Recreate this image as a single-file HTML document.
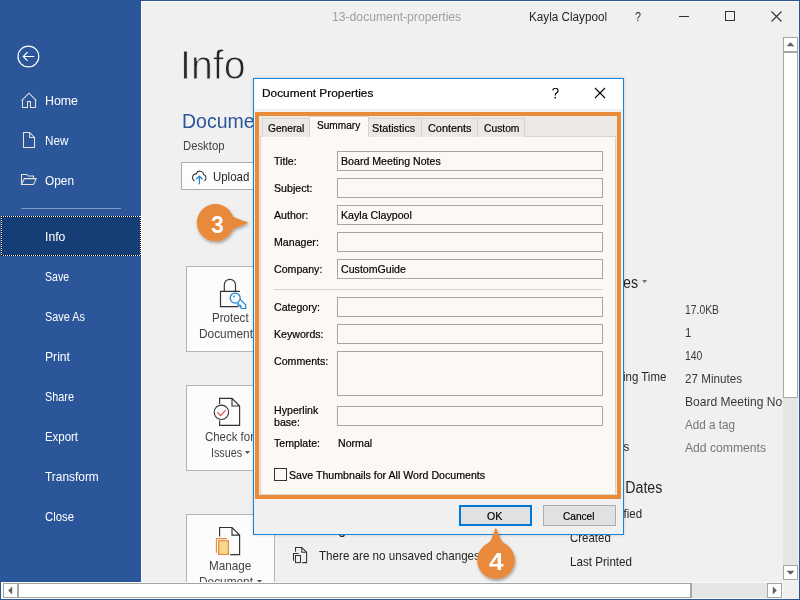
<!DOCTYPE html>
<html><head><meta charset="utf-8"><style>
html,body{margin:0;padding:0;}
body{width:800px;height:600px;overflow:hidden;position:relative;font-family:"Liberation Sans",sans-serif;}
.t{position:absolute;white-space:nowrap;line-height:1;transform-origin:0 0;}
.r{position:absolute;}
</style></head><body>
<div class="r" style="left:0px;top:0px;width:800px;height:600px;background:#F0F0F0;"></div>
<div class="r" style="left:0px;top:0px;width:141px;height:582px;background:#2B579A;"></div>
<div class="r" style="left:0px;top:0px;width:800px;height:1px;background:#2B579A;"></div>
<div class="r" style="left:141px;top:1px;width:658px;height:1px;background:#FAFAF8;"></div>
<div class="r" style="left:141px;top:1px;width:1px;height:581px;background:#FAFAF8;"></div>
<svg class="r" style="left:16px;top:45px" width="25" height="24" viewBox="0 0 25 24"><circle cx="12.4" cy="11.5" r="10.4" fill="none" stroke="#fff" stroke-width="1.2"/><path d="M7.3 11.5H18.3M11.6 7.2L7.3 11.5L11.6 15.8" fill="none" stroke="#fff" stroke-width="1.2"/></svg>
<svg class="r" style="left:16px;top:88px" width="24" height="24" viewBox="0 0 24 24"><path d="M5.6 12.6L13 5.2L20.4 12.6M6.5 11.6V19.5H11.5V13.6H14.5V19.5H19.5V11.6" fill="none" stroke="#E6E2DA" stroke-width="1.05"/></svg>
<svg class="r" style="left:16px;top:126px" width="24" height="64" viewBox="0 0 24 64"><g fill="none" stroke="#E6E2DA" stroke-width="1.05"><path d="M7.5 6.5H13.6L18.5 11.4V21.5H7.5Z M13.6 6.5V11.4H18.5"/><path d="M5.5 58.5V48.5H10.8L12.3 50H17.5V52.5 M5.5 58.5L8.3 52.6H20.2L17.5 58.5Z"/></g></svg>
<div class="t" style="left:45.00px;top:94.00px;font-size:13px;color:#fff;transform:scaleX(0.9517);">Home</div>
<div class="t" style="left:45.00px;top:133.80px;font-size:13px;color:#fff;transform:scaleX(0.8998);">New</div>
<div class="t" style="left:45.00px;top:173.70px;font-size:13px;color:#fff;transform:scaleX(0.9120);">Open</div>
<div class="r" style="left:21px;top:208px;width:100px;height:1px;background:#7F9CC8;"></div>
<div class="r" style="left:1px;top:216px;width:140px;height:40px;background:#153E76;"></div>
<div class="r" style="left:1px;top:216px;width:140px;height:40px;background-image:repeating-linear-gradient(90deg,#fff 0 1px,#000 1px 2px);-webkit-mask:linear-gradient(#000,#000) top/100% 1px no-repeat,linear-gradient(#000,#000) bottom/100% 1px no-repeat;"></div>
<div class="r" style="left:1px;top:216px;width:140px;height:40px;background-image:repeating-linear-gradient(180deg,#fff 0 1px,#000 1px 2px);-webkit-mask:linear-gradient(#000,#000) left/1px 100% no-repeat,linear-gradient(#000,#000) right/1px 100% no-repeat;"></div>
<div class="t" style="left:45.00px;top:229.80px;font-size:13px;color:#fff;transform:scaleX(0.9363);">Info</div>
<div class="t" style="left:45.00px;top:270.00px;font-size:13px;color:#fff;transform:scaleX(0.8100);">Save</div>
<div class="t" style="left:45.00px;top:310.00px;font-size:13px;color:#fff;transform:scaleX(0.8386);">Save As</div>
<div class="t" style="left:45.00px;top:350.00px;font-size:13px;color:#fff;transform:scaleX(0.9353);">Print</div>
<div class="t" style="left:45.00px;top:390.00px;font-size:13px;color:#fff;transform:scaleX(0.8360);">Share</div>
<div class="t" style="left:45.00px;top:430.00px;font-size:13px;color:#fff;transform:scaleX(0.8784);">Export</div>
<div class="t" style="left:45.00px;top:470.00px;font-size:13px;color:#fff;transform:scaleX(0.9150);">Transform</div>
<div class="t" style="left:45.00px;top:510.00px;font-size:13px;color:#fff;transform:scaleX(0.8726);">Close</div>
<div class="t" style="left:332.40px;top:11.24px;font-size:12px;color:#A0A0A0;transform:scaleX(1.0142);">13-document-properties</div>
<div class="t" style="left:528.80px;top:11.24px;font-size:12px;color:#262626;transform:scaleX(0.9745);">Kayla Claypool</div>
<div class="t" style="left:634.80px;top:11.24px;font-size:12px;color:#262626;transform:scaleX(0.8991);">?</div>
<div class="r" style="left:679px;top:16px;width:10px;height:1px;background:#333;"></div>
<div class="r" style="left:725px;top:11px;width:10px;height:10px;border:1px solid #333;box-sizing:border-box;"></div>
<svg class="r" style="left:771px;top:11px" width="11" height="11" viewBox="0 0 11 11"><path d="M0.5 0.5L10.5 10.5M10.5 0.5L0.5 10.5" stroke="#333" stroke-width="1.1"/></svg>
<div class="t" style="left:180.00px;top:45.14px;font-size:40px;color:#262626;transform:scaleX(0.9818);-webkit-text-stroke:0.9px #F0F0F0;">Info</div>
<div class="t" style="left:182.20px;top:110.57px;font-size:20px;color:#2B579A;transform:scaleX(0.9750);">Document Properties</div>
<div class="t" style="left:182.80px;top:139.84px;font-size:12px;color:#444;transform:scaleX(0.9428);">Desktop</div>
<div class="r" style="left:181px;top:162px;width:120px;height:28px;background:#FDFDFD;border:1px solid #ABABAB;box-sizing:border-box;"></div>
<svg class="r" style="left:185px;top:165px" width="30" height="25" viewBox="0 0 30 25"><path d="M9.5 15.7A3.6 3.6 0 0 1 11.4 8.9A3.6 3.6 0 0 1 18.5 9.6A3.3 3.3 0 0 1 19.3 15.7" fill="none" stroke="#3A3A3A" stroke-width="1.05"/><path d="M14.4 19.2V11.4M11.2 14.3L14.4 11.2L17.6 14.3" fill="none" stroke="#1E88D5" stroke-width="1.25"/></svg>
<div class="t" style="left:213.20px;top:169.50px;font-size:13px;color:#262626;transform:scaleX(0.8800);">Upload</div>
<div class="r" style="left:186px;top:266px;width:89px;height:86px;background:#FCFCFC;border:1px solid #B4B4B4;box-sizing:border-box;"></div>
<div class="r" style="left:186px;top:385px;width:89px;height:86px;background:#FCFCFC;border:1px solid #B4B4B4;box-sizing:border-box;"></div>
<div class="r" style="left:186px;top:514px;width:89px;height:80px;background:#FCFCFC;border:1px solid #B4B4B4;box-sizing:border-box;"></div>
<svg class="r" style="left:214px;top:274px" width="36" height="38" viewBox="0 0 36 38"><g fill="none" stroke="#333" stroke-width="1.15"><path d="M10.3 17.2V10.9A5.6 5.6 0 0 1 21.5 10.9V17.2"/><path d="M24.5 32.6H6.5V17.3H25.8"/></g><path d="M24.6 27.4L31.8 34.6V38H27.6L26.4 36.8L27.2 36L25.9 34.7L25.1 35.5L23.8 34.2L24.6 33.4L22.4 31.2" fill="#FCFCFC" stroke="#1E88D5" stroke-width="1.2" transform="translate(0,-3.5)"/><circle cx="21.2" cy="24.1" r="5" fill="#FCFCFC" stroke="#1E88D5" stroke-width="1.25"/><rect x="19.2" y="21.6" width="1.6" height="1.6" fill="#1E88D5"/></svg>
<div class="t" style="left:211.70px;top:310.70px;font-size:13px;color:#444;transform:scaleX(0.8887);">Protect</div>
<div class="t" style="left:198.70px;top:326.50px;font-size:13px;color:#444;transform:scaleX(0.9115);">Document</div>
<svg class="r" style="left:210px;top:392px" width="36" height="38" viewBox="0 0 36 38"><g fill="none" stroke="#333" stroke-width="1.15"><path d="M9.6 12V6.4H22L29.6 14V33.3H9.6V28.5M22 6.4V14H29.6"/><circle cx="11.4" cy="20.3" r="7.2"/></g><path d="M7.3 20.2L10.5 23.6L15.6 18.2" fill="none" stroke="#E8474C" stroke-width="1.2"/></svg>
<div class="t" style="left:205.20px;top:430.00px;font-size:13px;color:#444;transform:scaleX(0.8800);">Check for</div>
<div class="t" style="left:210.70px;top:445.60px;font-size:13px;color:#444;transform:scaleX(0.8251);">Issues</div>
<svg class="r" style="left:245px;top:451px" width="6" height="4"><path d="M0 0H5L2.5 3Z" fill="#555"/></svg>
<svg class="r" style="left:210px;top:522px" width="36" height="38" viewBox="0 0 36 38"><path d="M9.6 14.6V5.5H22L29.6 13.1V32.6H20.3M22 5.5V13.1H29.6" fill="none" stroke="#333" stroke-width="1.15"/><path d="M6.4 30.8V16.6H16.8" fill="none" stroke="#E8893B" stroke-width="1.1"/><rect x="8.6" y="18.8" width="9.8" height="13.6" fill="#F6D88F" stroke="#E8893B" stroke-width="1.25"/></svg>
<div class="t" style="left:209.40px;top:559.20px;font-size:13px;color:#444;transform:scaleX(0.9005);">Manage</div>
<div class="t" style="left:199.00px;top:575.00px;font-size:13px;color:#444;transform:scaleX(0.9115);">Document</div>
<svg class="r" style="left:257px;top:580px" width="6" height="4"><path d="M0 0H5L2.5 3Z" fill="#555"/></svg>
<div class="t" style="left:303.00px;top:520.96px;font-size:16px;color:#262626;transform:scaleX(0.8800);">Manage Document</div>
<svg class="r" style="left:286px;top:542px" width="30" height="24" viewBox="0 0 30 24"><g fill="none" stroke="#333" stroke-width="1.05"><path d="M9.5 9.8V5.5H15.8L20.6 10.3V20.6H16.2M15.8 5.5V10.3H20.6"/><rect x="9.5" y="13.5" width="5" height="7.1"/><path d="M7.5 18.8V11.5H12.7"/></g></svg>
<div class="t" style="left:318.75px;top:548.75px;font-size:13px;color:#262626;transform:scaleX(0.8940);">There are no unsaved changes.</div>
<div class="r" style="left:141px;top:0;width:641px;height:582px;overflow:hidden;">
<div class="t" style="left:432.15px;top:275.49px;font-size:15.6px;color:#262626;transform:scaleX(0.9150);">Properties</div>
<svg class="r" style="left:501px;top:280px" width="6" height="4"><path d="M0 0H5.2L2.6 3.2Z" fill="#777"/></svg>
<div class="t" style="left:434.71px;top:370.40px;font-size:13px;color:#262626;transform:scaleX(0.8800);">Total Editing Time</div>
<div class="t" style="left:432.90px;top:439.70px;font-size:13px;color:#262626;transform:scaleX(0.8800);">Comments</div>
<div class="t" style="left:544.30px;top:302.60px;font-size:13px;color:#3A3A3A;transform:scaleX(0.7973);">17.0KB</div>
<div class="t" style="left:544.30px;top:326.00px;font-size:13px;color:#3A3A3A;transform:scaleX(0.8800);">1</div>
<div class="t" style="left:544.30px;top:349.00px;font-size:13px;color:#3A3A3A;transform:scaleX(0.8023);">140</div>
<div class="t" style="left:544.30px;top:372.00px;font-size:13px;color:#3A3A3A;transform:scaleX(0.8964);">27 Minutes</div>
<div class="t" style="left:544.30px;top:395.00px;font-size:13px;color:#3A3A3A;transform:scaleX(0.9270);">Board Meeting Notes</div>
<div class="t" style="left:544.30px;top:418.00px;font-size:13px;color:#767676;transform:scaleX(0.8984);">Add a tag</div>
<div class="t" style="left:544.30px;top:440.70px;font-size:13px;color:#767676;transform:scaleX(0.9343);">Add comments</div>
<div class="t" style="left:431.35px;top:479.79px;font-size:15.6px;color:#262626;transform:scaleX(0.9150);">Related Dates</div>
<div class="t" style="left:432.66px;top:506.50px;font-size:13px;color:#262626;transform:scaleX(0.8800);">Last Modified</div>
<div class="t" style="left:428.80px;top:531.20px;font-size:13px;color:#262626;transform:scaleX(0.8822);">Created</div>
<div class="t" style="left:428.80px;top:555.20px;font-size:13px;color:#262626;transform:scaleX(0.8938);">Last Printed</div>
</div>
<div class="r" style="left:783px;top:37px;width:15px;height:15px;background:#fff;border:1px solid #A6A6A6;box-sizing:border-box;"></div>
<svg class="r" style="left:786px;top:41px" width="9" height="6"><path d="M0.5 5.2H8.5L4.5 1.2Z" fill="#606060"/></svg>
<div class="r" style="left:783px;top:52px;width:15px;height:346px;background:#fff;border:1px solid #A6A6A6;box-sizing:border-box;"></div>
<div class="r" style="left:783px;top:398px;width:15px;height:167px;background:#E5E5E5;"></div>
<div class="r" style="left:783px;top:565px;width:15px;height:15px;background:#fff;border:1px solid #A6A6A6;box-sizing:border-box;"></div>
<svg class="r" style="left:786px;top:570px" width="9" height="6"><path d="M0.5 0.8H8.5L4.5 4.8Z" fill="#606060"/></svg>
<div class="r" style="left:1px;top:582px;width:782px;height:17px;background:#FAFAF8;"></div>
<div class="r" style="left:3px;top:583px;width:15px;height:15px;background:#fff;border:1px solid #A6A6A6;box-sizing:border-box;"></div>
<svg class="r" style="left:7px;top:586px" width="6" height="9"><path d="M5.2 0.5V8.5L1.2 4.5Z" fill="#606060"/></svg>
<div class="r" style="left:18px;top:583px;width:674px;height:15px;background:#fff;border:1px solid #A6A6A6;border-right-width:2px;box-sizing:border-box;"></div>
<div class="r" style="left:692px;top:583px;width:75px;height:15px;background:#E5E5E5;"></div>
<div class="r" style="left:767px;top:583px;width:15px;height:15px;background:#fff;border:1px solid #A6A6A6;box-sizing:border-box;"></div>
<svg class="r" style="left:772px;top:586px" width="6" height="9"><path d="M0.8 0.5V8.5L4.8 4.5Z" fill="#606060"/></svg>
<div class="r" style="left:783px;top:580px;width:15px;height:19px;background:#F0F0F0;"></div>
<div class="r" style="left:0px;top:0px;width:1px;height:600px;background:#2B579A;"></div>
<div class="r" style="left:799px;top:0px;width:1px;height:600px;background:#2B579A;"></div>
<div class="r" style="left:0px;top:599px;width:800px;height:1px;background:#2B579A;"></div>
<div class="r" style="left:253px;top:78px;width:371px;height:457px;background:#F0F0F0;border:1px solid #1883D7;box-sizing:border-box;box-shadow:0 0 3px rgba(0,0,0,0.16);"></div>
<div class="r" style="left:254px;top:79px;width:369px;height:30px;background:#fff;"></div>
<div class="t" style="left:262.30px;top:87.91px;font-size:11.8px;color:#000;transform:scaleX(1.0051);-webkit-text-stroke:0.2px #000;">Document Properties</div>
<svg class="r" style="left:552px;top:88px" width="7" height="11" viewBox="0 0 7 11"><path d="M0.8 2.6A2.6 2.4 0 1 1 4.4 4.9C3.3 5.6 3.2 6 3.2 7.4" fill="none" stroke="#000" stroke-width="1.15"/><rect x="2.5" y="9" width="1.4" height="1.5" fill="#000"/></svg>
<svg class="r" style="left:594px;top:87px" width="12" height="12" viewBox="0 0 12 12"><path d="M1 1L11 11M11 1L1 11" stroke="#000" stroke-width="1.1"/></svg>
<div class="r" style="left:255px;top:112px;width:366px;height:387px;background:#FBF7F4;"></div>
<div class="r" style="left:259px;top:116px;width:358px;height:379px;background:#ECE8E4;"></div>
<div class="r" style="left:260px;top:136px;width:356px;height:359px;background:#FCF8F4;border:1px solid #D8D4D0;box-sizing:border-box;"></div>
<div class="r" style="left:262px;top:118px;width:49px;height:19px;background:#ECE8E4;border:1px solid #D8D4D0;border-bottom:none;box-sizing:border-box;"></div>
<div class="t" style="left:267.80px;top:122.69px;font-size:11px;color:#000;transform:scaleX(0.9277);-webkit-text-stroke:0.2px #000;">General</div>
<div class="r" style="left:368px;top:118px;width:54px;height:19px;background:#ECE8E4;border:1px solid #D8D4D0;border-bottom:none;box-sizing:border-box;"></div>
<div class="t" style="left:372.40px;top:122.69px;font-size:11px;color:#000;transform:scaleX(0.9816);-webkit-text-stroke:0.2px #000;">Statistics</div>
<div class="r" style="left:421px;top:118px;width:57px;height:19px;background:#ECE8E4;border:1px solid #D8D4D0;border-bottom:none;box-sizing:border-box;"></div>
<div class="t" style="left:427.70px;top:122.69px;font-size:11px;color:#000;transform:scaleX(0.9881);-webkit-text-stroke:0.2px #000;">Contents</div>
<div class="r" style="left:477px;top:118px;width:48px;height:19px;background:#ECE8E4;border:1px solid #D8D4D0;border-bottom:none;box-sizing:border-box;"></div>
<div class="t" style="left:483.60px;top:122.69px;font-size:11px;color:#000;transform:scaleX(0.9341);-webkit-text-stroke:0.2px #000;">Custom</div>
<div class="r" style="left:309px;top:116px;width:60px;height:21px;background:#FCF8F4;border:1px solid #D8D4D0;border-bottom:none;box-sizing:border-box;"></div>
<div class="t" style="left:316.80px;top:120.19px;font-size:11px;color:#000;transform:scaleX(0.9180);-webkit-text-stroke:0.2px #000;">Summary</div>
<div class="r" style="left:255px;top:112px;width:366px;height:387px;border:4px solid #E98B39;box-sizing:border-box;"></div>
<div class="t" style="left:274.00px;top:155.69px;font-size:11px;color:#000;transform:scaleX(0.9650);-webkit-text-stroke:0.2px #000;">Title:</div>
<div class="r" style="left:337px;top:151px;width:266px;height:20px;background:#FCF8F4;border:1px solid #A8A6A4;box-sizing:border-box;"></div>
<div class="t" style="left:340.50px;top:155.69px;font-size:11px;color:#000;transform:scaleX(0.9650);-webkit-text-stroke:0.2px #000;">Board Meeting Notes</div>
<div class="t" style="left:274.00px;top:182.69px;font-size:11px;color:#000;transform:scaleX(0.9650);-webkit-text-stroke:0.2px #000;">Subject:</div>
<div class="r" style="left:337px;top:178px;width:266px;height:20px;background:#FCF8F4;border:1px solid #A8A6A4;box-sizing:border-box;"></div>
<div class="t" style="left:274.00px;top:209.69px;font-size:11px;color:#000;transform:scaleX(0.9650);-webkit-text-stroke:0.2px #000;">Author:</div>
<div class="r" style="left:337px;top:205px;width:266px;height:20px;background:#FCF8F4;border:1px solid #A8A6A4;box-sizing:border-box;"></div>
<div class="t" style="left:340.50px;top:209.69px;font-size:11px;color:#000;transform:scaleX(0.9650);-webkit-text-stroke:0.2px #000;">Kayla Claypool</div>
<div class="t" style="left:274.00px;top:236.69px;font-size:11px;color:#000;transform:scaleX(0.9650);-webkit-text-stroke:0.2px #000;">Manager:</div>
<div class="r" style="left:337px;top:232px;width:266px;height:20px;background:#FCF8F4;border:1px solid #A8A6A4;box-sizing:border-box;"></div>
<div class="t" style="left:274.00px;top:263.69px;font-size:11px;color:#000;transform:scaleX(0.9650);-webkit-text-stroke:0.2px #000;">Company:</div>
<div class="r" style="left:337px;top:259px;width:266px;height:20px;background:#FCF8F4;border:1px solid #A8A6A4;box-sizing:border-box;"></div>
<div class="t" style="left:340.50px;top:263.69px;font-size:11px;color:#000;transform:scaleX(0.9650);-webkit-text-stroke:0.2px #000;">CustomGuide</div>
<div class="t" style="left:274.00px;top:301.69px;font-size:11px;color:#000;transform:scaleX(0.9650);-webkit-text-stroke:0.2px #000;">Category:</div>
<div class="r" style="left:337px;top:297px;width:266px;height:20px;background:#FCF8F4;border:1px solid #A8A6A4;box-sizing:border-box;"></div>
<div class="t" style="left:274.00px;top:328.69px;font-size:11px;color:#000;transform:scaleX(0.9650);-webkit-text-stroke:0.2px #000;">Keywords:</div>
<div class="r" style="left:337px;top:324px;width:266px;height:20px;background:#FCF8F4;border:1px solid #A8A6A4;box-sizing:border-box;"></div>
<div class="r" style="left:274px;top:289px;width:329px;height:1px;background:#D8D4D0;"></div>
<div class="t" style="left:274.00px;top:355.69px;font-size:11px;color:#000;transform:scaleX(0.9650);-webkit-text-stroke:0.2px #000;">Comments:</div>
<div class="r" style="left:337px;top:351px;width:266px;height:45px;background:#FCF8F4;border:1px solid #A8A6A4;box-sizing:border-box;"></div>
<div class="t" style="left:274.00px;top:404.69px;font-size:11px;color:#000;transform:scaleX(0.9650);-webkit-text-stroke:0.2px #000;">Hyperlink</div>
<div class="t" style="left:274.00px;top:416.69px;font-size:11px;color:#000;transform:scaleX(0.9650);-webkit-text-stroke:0.2px #000;">base:</div>
<div class="r" style="left:337px;top:406px;width:266px;height:20px;background:#FCF8F4;border:1px solid #A8A6A4;box-sizing:border-box;"></div>
<div class="t" style="left:274.00px;top:437.69px;font-size:11px;color:#000;transform:scaleX(0.9650);-webkit-text-stroke:0.2px #000;">Template:</div>
<div class="t" style="left:338.00px;top:437.69px;font-size:11px;color:#000;transform:scaleX(0.9650);-webkit-text-stroke:0.2px #000;">Normal</div>
<div class="r" style="left:274px;top:468px;width:13px;height:13px;background:#FCF8F4;border:1px solid #333;box-sizing:border-box;"></div>
<div class="t" style="left:289.00px;top:469.69px;font-size:11px;color:#000;transform:scaleX(0.9650);-webkit-text-stroke:0.2px #000;">Save Thumbnails for All Word Documents</div>
<div class="r" style="left:459px;top:505px;width:73px;height:21px;background:#E1E1E1;border:2px solid #0078D7;box-sizing:border-box;"></div>
<div class="t" style="left:487.00px;top:510.59px;font-size:11px;color:#000;transform:scaleX(0.9650);-webkit-text-stroke:0.2px #000;">OK</div>
<div class="r" style="left:543px;top:505px;width:73px;height:21px;background:#E1E1E1;border:1px solid #ADADAD;box-sizing:border-box;"></div>
<div class="t" style="left:562.60px;top:510.59px;font-size:11px;color:#000;transform:scaleX(0.9200);-webkit-text-stroke:0.2px #000;">Cancel</div>
<svg class="r" style="left:0;top:0" width="800" height="600"><defs><filter id="sh3" x="-50%" y="-50%" width="200%" height="200%"><feDropShadow dx="0.8" dy="1.8" stdDeviation="1.4" flood-color="#000" flood-opacity="0.35"/></filter></defs><g filter="url(#sh3)" fill="#E8893B"><circle cx="215.4" cy="222.7" r="18.6"/><path d="M248.7 222.8L236.5 218.2Q232 216.8 228.5 212L228.5 233.5Q232 229 236.5 227.4Z"/></g></svg>
<div class="t" style="left:210.80px;top:213.51px;font-size:23.5px;color:#fff;font-weight:bold;transform:scaleX(0.9795);">3</div>
<svg class="r" style="left:0;top:0" width="800" height="600"><defs><filter id="sh4" x="-50%" y="-50%" width="200%" height="200%"><feDropShadow dx="0.8" dy="1.8" stdDeviation="1.4" flood-color="#000" flood-opacity="0.35"/></filter></defs><g filter="url(#sh4)" fill="#E8893B"><circle cx="496" cy="560.2" r="18.8"/><path d="M495.8 527.5L491.6 538.5Q490.6 541.6 487.5 543.8L504.5 543.8Q501.4 541.6 500.4 538.5Z"/></g></svg>
<div class="t" style="left:488.80px;top:550.91px;font-size:23.5px;color:#fff;font-weight:bold;transform:scaleX(1.1172);">4</div>
</body></html>
